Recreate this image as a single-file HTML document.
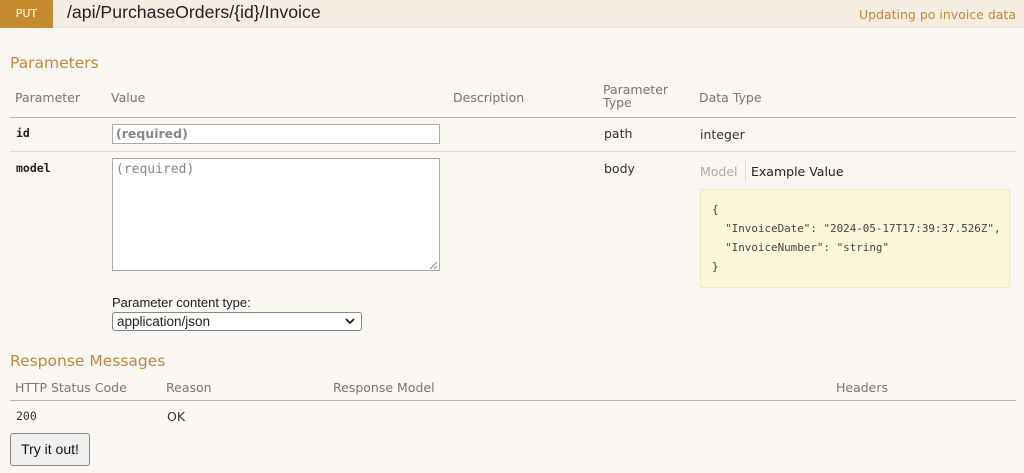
<!DOCTYPE html>
<html><head><meta charset="utf-8"><style>
*{margin:0;padding:0;box-sizing:border-box}
body{width:1024px;height:473px;background:#faf6f1;font-family:"DejaVu Sans","Liberation Sans",sans-serif;color:#222;position:relative;overflow:hidden}
.a{position:absolute;white-space:nowrap}
.hdr{left:0;top:0;width:1024px;height:28px;background:#f6ede2;border-bottom:1px solid #efe3d3}
.put{left:0;top:0;width:53px;height:28px;background:#c68a2e;color:#fff;font-size:11px;line-height:28px;text-align:center}
.path{left:67px;top:2px;font-size:17.7px;font-family:"Liberation Sans",sans-serif;color:#222}
.desc{right:8px;top:7px;font-size:12.5px;color:#c0893b}
.h{font-size:15.5px;color:#c0893b}
.th{font-size:12.5px;color:#777}
.td{font-size:12.5px;color:#333}
.mono{font-family:"DejaVu Sans Mono","Liberation Mono",monospace;font-size:11.5px}
.line{left:10px;height:1px;background:#bdb3a8}
.line2{left:10px;height:1px;background:#e2dcd4}
.inp{background:#fff;border:1px solid #aaa}
</style></head><body>
<div class="a hdr"></div>
<div class="a put">PUT</div>
<div class="a path">/api/PurchaseOrders/{id}/Invoice</div>
<div class="a desc">Updating po invoice data</div>

<div class="a h" style="left:10px;top:54px">Parameters</div>
<div class="a th" style="left:15px;top:90px">Parameter</div>
<div class="a th" style="left:111px;top:90px">Value</div>
<div class="a th" style="left:453px;top:90px">Description</div>
<div class="a th" style="left:603px;top:83px;line-height:13px">Parameter<br>Type</div>
<div class="a th" style="left:699px;top:90px">Data Type</div>
<div class="a line" style="top:117px;width:1006px"></div>

<div class="a mono" style="left:16px;top:126px;font-weight:bold">id</div>
<div class="a inp" style="left:112px;top:124px;width:328px;height:20px"></div>
<div class="a" style="left:116px;top:126px;font-size:12.5px;color:#888;font-weight:bold">(required)</div>
<div class="a td" style="left:604px;top:126px">path</div>
<div class="a td" style="left:700px;top:127px">integer</div>
<div class="a line2" style="top:151px;width:1006px"></div>

<div class="a mono" style="left:16px;top:161px;font-weight:bold">model</div>
<div class="a inp" style="left:112px;top:158px;width:328px;height:113px"></div>
<div class="a mono" style="left:116px;top:162px;font-size:13px;color:#888">(required)</div>
<svg class="a" style="left:429px;top:261px" width="9" height="9"><path d="M8 1L1 8M8 5L5 8" stroke="#888" stroke-width="1"/></svg>
<div class="a td" style="left:604px;top:161px">body</div>
<div class="a td" style="left:700px;top:164px;color:#aaa">Model</div>
<div class="a" style="left:745px;top:160px;width:1px;height:22px;background:#e3ddd4"></div>
<div class="a td" style="left:751px;top:164px;color:#222">Example Value</div>
<div class="a" style="left:700px;top:189px;width:310px;height:99px;background:#fcf6db;border:1px solid #efe7c8"></div>
<div class="a mono" style="left:712px;top:200px;font-size:10.9px;line-height:19px;color:#444">{<br>&nbsp;&nbsp;"InvoiceDate": "2024-05-17T17:39:37.526Z",<br>&nbsp;&nbsp;"InvoiceNumber": "string"<br>}</div>

<div class="a" style="left:112px;top:295px;font-family:'Liberation Sans',sans-serif;font-size:13px;color:#222">Parameter content type:</div>
<div class="a" style="left:112px;top:312px;width:250px;height:19px;background:#fff;border:1px solid #888;border-radius:3px;font-family:'Liberation Sans',sans-serif;font-size:13.5px;padding-left:4px;line-height:17px">application/json</div>
<svg class="a" style="left:345px;top:318px" width="10" height="7"><path d="M1 1L5 5L9 1" stroke="#222" stroke-width="1.8" fill="none"/></svg>

<div class="a h" style="left:10px;top:352px">Response Messages</div>
<div class="a th" style="left:15px;top:380px">HTTP Status Code</div>
<div class="a th" style="left:166px;top:380px">Reason</div>
<div class="a th" style="left:333px;top:380px">Response Model</div>
<div class="a th" style="left:836px;top:380px">Headers</div>
<div class="a line" style="top:400px;width:1006px"></div>
<div class="a mono" style="left:16px;top:409px;color:#333">200</div>
<div class="a td" style="left:167px;top:409px">OK</div>
<div class="a" style="left:10px;top:433px;width:80px;height:33px;background:#efefef;border:1px solid #888;border-radius:3px;font-family:'Liberation Sans',sans-serif;font-size:14px;line-height:31px;text-align:center;color:#111">Try it out!</div>
</body></html>
